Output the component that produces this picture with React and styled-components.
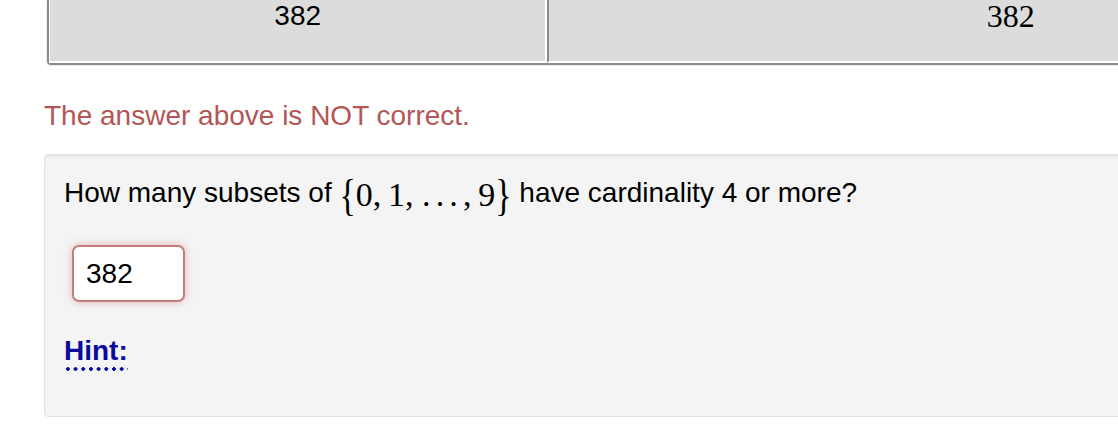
import styled, { createGlobalStyle } from "styled-components"

const Global = createGlobalStyle`
  html, body {
    margin: 0;
    padding: 0;
    background: #fff;
  }
  body {
    font-family: "Liberation Sans", Arial, Helvetica, sans-serif;
    color: #000;
  }
`

const App = () => {
  return (
    <Page>
      <Global />
      <Results>
        <colgroup>
          <col style={{ width: "498px" }} />
          <col style={{ width: "924px" }} />
        </colgroup>
        <tbody>
          <tr>
            <Cell>382</Cell>
            <Cell $serif>382</Cell>
          </tr>
        </tbody>
      </Results>

      <Verdict>The answer above is NOT correct.</Verdict>

      <Well>
        <Question>
          How many subsets of{" "}
          <MathSet>
            <Brace>{"{"}</Brace>0,{"\u2009"}1,{"\u2009"}
            <Dots>...</Dots>,{"\u2009"}9<Brace>{"}"}</Brace>
          </MathSet>{" "}
          have cardinality 4 or more?
        </Question>
        <Answer type="text" defaultValue="382" readOnly />
        <HintRow>
          <Hint>Hint:</Hint>
        </HintRow>
      </Well>
    </Page>
  )
}

export default App

const Page = styled.div`
  width: 1118px;
  height: 448px;
  overflow: hidden;
  padding-left: 44px;
  box-sizing: border-box;
`

const Results = styled.table`
  margin-left: 3px;
  width: 1425px;
  table-layout: fixed;
  border-collapse: separate;
  border-spacing: 0;
  border-left: 2px solid #8c8c8c;
  border-bottom: 2px solid #8c8c8c;
  border-bottom-left-radius: 4px;
  box-shadow: -1px 1px 0 #ececec;
`

const Cell = styled.td`
  vertical-align: top;
  background: #dcdcdc;
  text-align: center;
  padding: 1px 0 30px;
  line-height: 30px;
  border-bottom: 2px solid #fff;
  font-family: ${(p) =>
    p.$serif
      ? `"Liberation Serif", "DejaVu Serif", serif`
      : `"Liberation Sans", Arial, sans-serif`};
  font-size: ${(p) => (p.$serif ? "32px" : "28px")};
  border-left: ${(p) => (p.$serif ? "2px solid #8c8c8c" : "1px solid #fff")};
  border-right: ${(p) => (p.$serif ? "none" : "2px solid #fff")};
`

const Verdict = styled.div`
  margin-top: 35px;
  font-size: 28px;
  line-height: 32px;
  color: #b25656;
`

const Well = styled.div`
  margin-top: 22px;
  width: 1200px;
  padding: 19px;
  background: #f4f4f4;
  border: 1px solid #e2e2e2;
  border-radius: 4px;
  box-shadow: inset 0 2px 3px rgba(0, 0, 0, 0.05);
`

const Question = styled.div`
  margin-top: 3px;
  font-size: 28px;
  line-height: 32px;
  color: #000;
`

const MathSet = styled.span`
  font-family: "Liberation Serif", "DejaVu Serif", serif;
  font-size: 34px;
  line-height: 0;
  vertical-align: -4px;
`

const Dots = styled.span`
  letter-spacing: 0.15em;
  margin-left: 0.05em;
`

const Brace = styled.span`
  display: inline-block;
  transform: scaleY(1.32);
  transform-origin: 50% 62%;
`

const Answer = styled.input`
  display: block;
  box-sizing: border-box;
  margin: 36px 0 0 8px;
  width: 113px;
  height: 57px;
  padding: 0 12px;
  font-family: "Liberation Sans", Arial, sans-serif;
  font-size: 28px;
  color: #000;
  background: #fff;
  border: 2px solid #c47d7d;
  border-radius: 7px;
  box-shadow: 0 0 8px rgba(213, 140, 140, 0.6);
  outline: none;
`

const HintRow = styled.div`
  margin-top: 33px;
  margin-bottom: 26px;
`

const Hint = styled.div`
  width: fit-content;
  font-size: 28px;
  line-height: 32px;
  font-weight: bold;
  color: #0a0a9c;
  padding-bottom: 4px;
  background-image: radial-gradient(circle, #0a0a9c 1.6px, transparent 2px);
  background-size: 7.7px 4px;
  background-repeat: repeat-x;
  background-position: 0 100%;
`
